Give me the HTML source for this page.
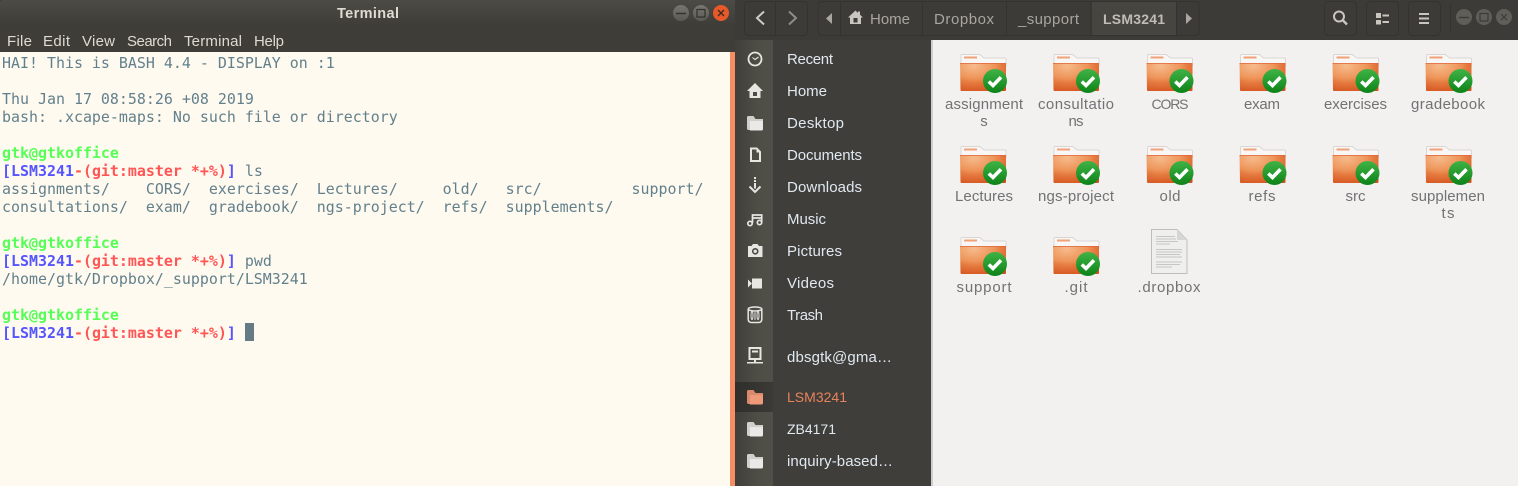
<!DOCTYPE html>
<html><head><meta charset="utf-8"><title>Terminal and Files</title>
<style>
html,body{margin:0;padding:0;background:#f2f1f0;width:1518px;height:486px;overflow:hidden}
svg{display:block}
.ui{font-family:"Liberation Sans",sans-serif}
.t{font-family:"DejaVu Sans Mono","Liberation Mono",monospace;font-size:14.94px;white-space:pre;fill:#62808c}
.g{fill:#55ff55;font-weight:bold}.b{fill:#5555ff;font-weight:bold}.r{fill:#ff5555;font-weight:bold}
.m{font-size:15px;fill:#dfdbd2}
.s{font-size:15px;fill:#e0e8f0}
.l{font-size:15px;fill:#717274;text-anchor:middle}
.p{font-size:15px;fill:#a8a69f}
</style></head><body>
<svg width="1518" height="486" viewBox="0 0 1518 486" xmlns="http://www.w3.org/2000/svg">
<defs>
<linearGradient id="tb" x1="0" y1="0" x2="0" y2="1"><stop offset="0" stop-color="#4d4b46"/><stop offset="1" stop-color="#3d3c37"/></linearGradient>
<linearGradient id="side" x1="0" y1="0" x2="1" y2="0"><stop offset="0" stop-color="#403f3a"/><stop offset=".6" stop-color="#4e4d46"/><stop offset="1" stop-color="#504f48"/></linearGradient>
<linearGradient id="sel" x1="0" y1="0" x2="1" y2="0"><stop offset="0" stop-color="#2f2e2b"/><stop offset="1" stop-color="#3b3a36"/></linearGradient>
<radialGradient id="fo" cx=".3" cy=".1" r="1"><stop offset="0" stop-color="#f6bb8c"/><stop offset=".45" stop-color="#ee9459"/><stop offset=".6" stop-color="#e57b40"/><stop offset="1" stop-color="#d4501c"/></radialGradient>
<linearGradient id="ck" x1="0" y1="0" x2="0" y2="1"><stop offset="0" stop-color="#3fb345"/><stop offset="1" stop-color="#0d8218"/></linearGradient>
<linearGradient id="wb" x1="0" y1="0" x2="0" y2="1"><stop offset="0" stop-color="#77766f"/><stop offset="1" stop-color="#5a5953"/></linearGradient>
<g id="folder">
<path d="M1 9V1.500Q1 .5 2 .5H19Q20 .5 21 1.500L24 4H45Q46 4 46 5V12H1Z" fill="#f8f7f6" stroke="#cfccc8" stroke-width=".7"/>
<rect x="4" y="2.500" width="13" height="2" fill="#f0a179"/>
<path d="M0 9H46V36Q46 37 44.500 37H2Q.5 37 .5 36Z" fill="url(#fo)"/>
<path d="M0 9H46V9.800H0Z" fill="#e0673a"/>
<circle cx="35" cy="27" r="12" fill="url(#ck)"/>
<path d="M28.800 27.500L33 31.500L41 23.300" fill="none" stroke="#fff" stroke-width="3.600"/>
</g>
<g id="sf"><path d="M0 1.500Q0 0 1.500 0H6.500L8.500 3H16V5H3V14H1.500Q0 14 0 12.500Z" fill="#d0d0cd"/><path d="M3 5H16V13Q16 14.500 14.500 14.500H3Z" fill="#e9e9e7"/></g>
</defs>

<!-- terminal -->
<rect x="0" y="0" width="735" height="52" fill="#3e3d38"/>
<path d="M0 27V3Q0 0 3 0H735V27Z" fill="url(#tb)"/>
<text class="ui" x="368" y="18" font-size="14.500" font-weight="bold" fill="#dfdbd2" text-anchor="middle" textLength="62">Terminal</text>
<text class="ui m" x="7" y="46" textLength="25">File</text>
<text class="ui m" x="43" y="46" textLength="27">Edit</text>
<text class="ui m" x="82" y="46" textLength="33">View</text>
<text class="ui m" x="127" y="46" textLength="45">Search</text>
<text class="ui m" x="184" y="46" textLength="58">Terminal</text>
<text class="ui m" x="254" y="46" textLength="30">Help</text>
<circle cx="681" cy="13" r="8" fill="url(#wb)"/><path d="M676 13.500H686" stroke="#32312d" stroke-width="1.400"/>
<circle cx="701" cy="13" r="8" fill="url(#wb)"/><rect x="697" y="9.500" width="8" height="7.500" fill="none" stroke="#32312d" stroke-width="1.200"/>
<circle cx="721" cy="13" r="8" fill="#e8592a"/><path d="M718 10L724 16M724 10L718 16" stroke="#3a2a20" stroke-width="1.300"/>
<rect x="0" y="52" width="730" height="434" fill="#fffaf0"/>
<rect x="730" y="52" width="5" height="434" fill="#f58f63"/>
<text class="t" x="2" y="68">HAI! This is BASH 4.4 - DISPLAY on :1</text>
<text class="t" x="2" y="104">Thu Jan 17 08:58:26 +08 2019</text>
<text class="t" x="2" y="122">bash: .xcape-maps: No such file or directory</text>
<text class="t g" x="2" y="158">gtk@gtkoffice</text>
<text class="t" x="2" y="176"><tspan class="b">[LSM3241</tspan><tspan class="r">-(git:master *+%)</tspan><tspan class="b">]</tspan> ls</text>
<text class="t" x="2" y="194">assignments/    CORS/  exercises/  Lectures/     old/   src/          support/</text>
<text class="t" x="2" y="212">consultations/  exam/  gradebook/  ngs-project/  refs/  supplements/</text>
<text class="t g" x="2" y="248">gtk@gtkoffice</text>
<text class="t" x="2" y="266"><tspan class="b">[LSM3241</tspan><tspan class="r">-(git:master *+%)</tspan><tspan class="b">]</tspan> pwd</text>
<text class="t" x="2" y="284">/home/gtk/Dropbox/_support/LSM3241</text>
<text class="t g" x="2" y="320">gtk@gtkoffice</text>
<text class="t" x="2" y="338"><tspan class="b">[LSM3241</tspan><tspan class="r">-(git:master *+%)</tspan><tspan class="b">]</tspan></text>
<rect x="245" y="323" width="9" height="18" fill="#657b83"/>

<!-- files header -->
<rect x="735" y="0" width="783" height="40" fill="#3c3b37"/>
<g fill="none" stroke="#34332f" stroke-width="1">
<rect x="744.500" y="1.500" width="63" height="34" rx="4"/><path d="M775.500 1.500V35.500"/>
<rect x="818" y="1.500" width="381" height="34" rx="4"/><path d="M840.500 1.500V35.500M922.500 1.500V35.500M1006.500 1.500V35.500M1091 1.500V35.500M1176.500 1.500V35.500"/>
<rect x="1324.500" y="1.500" width="32" height="34" rx="4"/><rect x="1366.500" y="1.500" width="32" height="34" rx="4"/><rect x="1408.500" y="1.500" width="32" height="34" rx="4"/>
<path d="M1450.500 4V33"/>
</g>
<rect x="1092" y="2" width="84" height="33" fill="#464540"/>
<path d="M764 11.500L757 18L764 24.500" fill="none" stroke="#d0cec8" stroke-width="2"/>
<path d="M789 11.500L796 18L789 24.500" fill="none" stroke="#8f8d87" stroke-width="2"/>
<path d="M832 13V24L826 18.500Z" fill="#a8a69f"/>
<path d="M1186 13V24L1192 18.500Z" fill="#a8a69f"/>
<path d="M855.500 10.500L848 17.500H850V24H861V17.500H863L860 14.700V11.500H858V13ZM853.500 18H857.500V22.500H853.500Z" fill="#c8c6bf" fill-rule="evenodd"/>
<text class="ui p" x="870" y="24" textLength="40">Home</text>
<text class="ui p" x="934" y="24" textLength="60">Dropbox</text>
<text class="ui p" x="1018" y="24" textLength="61">_support</text>
<text class="ui" x="1103" y="24" font-size="14" font-weight="bold" fill="#bebcb5" textLength="62">LSM3241</text>
<circle cx="1339" cy="16.500" r="5" fill="none" stroke="#c8c6bf" stroke-width="2"/><path d="M1343 20.500L1347 24.500" stroke="#c8c6bf" stroke-width="2.400"/>
<g fill="#c8c6bf"><rect x="1376" y="13" width="5" height="5"/><rect x="1376" y="20" width="5" height="4.500"/><rect x="1382.500" y="14.500" width="6.500" height="2"/><rect x="1382.500" y="21" width="6.500" height="2"/>
<rect x="1419" y="13" width="10" height="2"/><rect x="1419" y="17.500" width="10" height="2"/><rect x="1419" y="22" width="10" height="2"/></g>
<circle cx="1464" cy="17" r="8" fill="#5f5e58"/><path d="M1459 17.500H1469" stroke="#3c3b37" stroke-width="1.400"/>
<circle cx="1484" cy="17" r="8" fill="#5f5e58"/><rect x="1480" y="13.500" width="8" height="7.500" fill="none" stroke="#3c3b37" stroke-width="1.200"/>
<circle cx="1504" cy="17" r="8" fill="#5f5e58"/><path d="M1501 14L1507 20M1507 14L1501 20" stroke="#3c3b37" stroke-width="1.200"/>

<!-- sidebar -->
<rect x="735" y="40" width="196" height="446" fill="#3f3e3a"/>
<rect x="735" y="40" width="38" height="446" fill="url(#side)"/>
<rect x="735" y="382" width="38" height="30" fill="url(#sel)"/>
<rect x="931" y="40" width="2" height="446" fill="#cfcecb"/>
<rect x="933" y="40" width="585" height="446" fill="#f2f1f0"/>

<g fill="#e6e6e3">
<circle cx="755" cy="59" r="6.500" fill="none" stroke="#e6e6e3" stroke-width="1.800"/><path d="M758.500 57L755 59.500L752.500 57.500" stroke="#e6e6e3" stroke-width="1.100" fill="none"/>
<path d="M755 83L747 91H749.500V98H760.500V91H763ZM753 92H757V96H753Z" fill-rule="evenodd"/>
<use href="#sf" x="747" y="116"/>
<path d="M750 147.500H757L761 151.500V162H750ZM752 149.500V160H759V152.500H756.500V149.500Z" fill-rule="evenodd"/>
<rect x="754" y="177" width="2" height="2"/><rect x="754" y="180" width="2" height="2"/>
<path d="M754 183H756V188.500H754Z"/>
<path d="M749.500 186.500L755 192L760.500 186.500" fill="none" stroke="#e6e6e3" stroke-width="2"/>
<g fill="none" stroke="#e6e6e3" stroke-width="1.700"><circle cx="750" cy="223.500" r="2.200"/><circle cx="759.500" cy="222.500" r="2.200"/><path d="M752.500 223V215H761.700V222.500M752.500 218H761.700"/></g>
<path d="M748 246H751.500L753 244H757.500L759 246H762.500V257H748ZM755.200 248A3.300 3.300 0 1 0 755.300 254.600A3.300 3.300 0 1 0 755.200 248Z" fill-rule="evenodd"/><circle cx="755.200" cy="251.300" r="1.700"/>
<path d="M748 279.500L752 283.500L748 287.500ZM752 278.500H762V288.500H752Z"/>
<g fill="none" stroke="#e6e6e3" stroke-width="1.500"><ellipse cx="755" cy="309" rx="6.800" ry="2"/><path d="M748.200 309V319Q748.200 322.500 751.500 322.500H758.500Q761.800 322.500 761.800 319V309"/><ellipse cx="752" cy="315.500" rx="1" ry="4" stroke-width="1"/><ellipse cx="758" cy="315.500" rx="1" ry="4" stroke-width="1"/><path d="M755 312V320" stroke-width="1"/></g>
<rect x="749.500" y="348" width="11" height="11" fill="none" stroke="#e6e6e3" stroke-width="2"/><rect x="752" y="350.500" width="6" height="2"/><rect x="754" y="359" width="2" height="3"/><rect x="747" y="362" width="16" height="1.500"/>
</g>
<path d="M747 391.500Q747 390 748.500 390H753.500L755.500 393H763V395H750V404H748.500Q747 404 747 402.500Z" fill="#d98a6c"/><path d="M750 395H763V403Q763 404.500 761.500 404.500H750Z" fill="#ee9a7a"/>
<use href="#sf" x="747" y="422"/>
<use href="#sf" x="747" y="454"/>

<g class="ui">
<text class="s" x="787" y="64" textLength="46">Recent</text>
<text class="s" x="787" y="96" textLength="40">Home</text>
<text class="s" x="787" y="128" textLength="57">Desktop</text>
<text class="s" x="787" y="160" textLength="75">Documents</text>
<text class="s" x="787" y="192" textLength="75">Downloads</text>
<text class="s" x="787" y="224" textLength="39">Music</text>
<text class="s" x="787" y="256" textLength="55">Pictures</text>
<text class="s" x="787" y="288" textLength="47">Videos</text>
<text class="s" x="787" y="320" textLength="36">Trash</text>
<text class="s" x="787" y="362" textLength="105">dbsgtk@gma…</text>
<text class="s" x="787" y="402" font-size="14" textLength="60" style="fill:#e8835c;font-size:14px">LSM3241</text>
<text class="s" x="787" y="434" textLength="49" style="font-size:14px">ZB4171</text>
<text class="s" x="787" y="466" textLength="106">inquiry-based…</text>
</g>

<!-- folders -->
<use href="#folder" x="960" y="54"/><use href="#folder" x="1053" y="54"/><use href="#folder" x="1146.500" y="54"/><use href="#folder" x="1239.500" y="54"/><use href="#folder" x="1332.500" y="54"/><use href="#folder" x="1425.500" y="54"/>
<use href="#folder" x="960" y="146"/><use href="#folder" x="1053" y="146"/><use href="#folder" x="1146.500" y="146"/><use href="#folder" x="1239.500" y="146"/><use href="#folder" x="1332.500" y="146"/><use href="#folder" x="1425.500" y="146"/>
<use href="#folder" x="960" y="237"/><use href="#folder" x="1053" y="237"/>

<!-- document -->
<path d="M1151.500 229.500H1177L1187 240V273.500H1151.500Z" fill="#efefed" stroke="#bdbdba"/>
<path d="M1177 229.500L1187 240H1178Q1177 240 1177 239Z" fill="#d6d6d3"/>
<g stroke="#c6c6c3" stroke-width="1"><path d="M1156 236.500H1175M1156 239H1176M1156 241.500H1178M1156 244H1170M1156 249.500H1182M1156 252H1182M1156 254.500H1180M1156 257H1182M1156 262H1182M1156 264.500H1180M1156 267H1172"/></g>

<g class="ui">
<text class="l" x="984" y="109" textLength="78">assignment</text><text class="l" x="984" y="126">s</text>
<text class="l" x="1076" y="109" textLength="76">consultatio</text><text class="l" x="1076" y="126" textLength="15">ns</text>
<text class="l" x="1170" y="109" textLength="37" style="font-size:14px">CORS</text>
<text class="l" x="1262" y="109" textLength="36">exam</text>
<text class="l" x="1355.500" y="109" textLength="63">exercises</text>
<text class="l" x="1448" y="109" textLength="74">gradebook</text>
<text class="l" x="984" y="201" textLength="58">Lectures</text>
<text class="l" x="1076" y="201" textLength="76">ngs-project</text>
<text class="l" x="1170" y="201" textLength="21">old</text>
<text class="l" x="1262" y="201" textLength="27">refs</text>
<text class="l" x="1355.500" y="201" textLength="20">src</text>
<text class="l" x="1448" y="201" textLength="74">supplemen</text><text class="l" x="1448" y="218" textLength="13">ts</text>
<text class="l" x="984" y="292" textLength="55">support</text>
<text class="l" x="1076" y="292" textLength="23">.git</text>
<text class="l" x="1169" y="292" textLength="63">.dropbox</text>
</g>
</svg>
</body></html>
